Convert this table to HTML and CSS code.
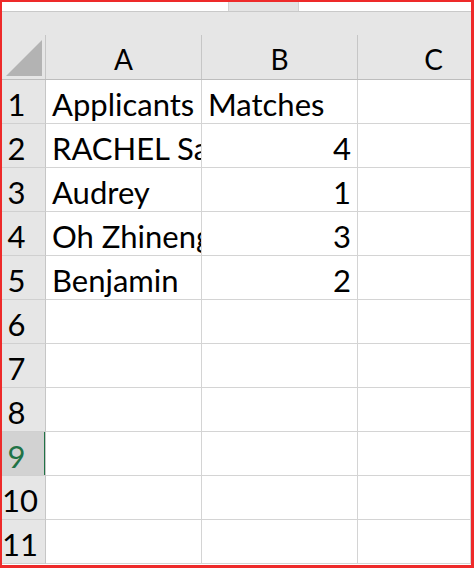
FILE: index.html
```html
<!DOCTYPE html>
<html>
<head>
<meta charset="utf-8">
<link rel="stylesheet" href="styles.css">
</head>
<body>
<div class="frame">
  <div class="topbar"><div class="tab"></div></div>
  <div class="colheads">
    <div class="corner"><svg class="tri" width="36" height="36" viewBox="0 0 36 36"><polygon points="36,0 36,36 0,36" fill="#b3b3b3"/></svg></div>
    <div class="ch">A</div>
    <div class="ch">B</div>
    <div class="ch last">C</div>
  </div>
  <div class="sheet">
    <div class="rh">1</div><div class="c">Applicants</div><div class="c">Matches</div><div class="c"></div>
    <div class="rh">2</div><div class="c">RACHEL Sang</div><div class="c num">4</div><div class="c"></div>
    <div class="rh">3</div><div class="c">Audrey</div><div class="c num">1</div><div class="c"></div>
    <div class="rh">4</div><div class="c">Oh Zhineng</div><div class="c num">3</div><div class="c"></div>
    <div class="rh">5</div><div class="c">Benjamin</div><div class="c num">2</div><div class="c"></div>
    <div class="rh">6</div><div class="c"></div><div class="c"></div><div class="c"></div>
    <div class="rh">7</div><div class="c"></div><div class="c"></div><div class="c"></div>
    <div class="rh">8</div><div class="c"></div><div class="c"></div><div class="c"></div>
    <div class="rh sel">9</div><div class="c"></div><div class="c"></div><div class="c"></div>
    <div class="rh">10</div><div class="c"></div><div class="c"></div><div class="c"></div>
    <div class="rh">11</div><div class="c"></div><div class="c"></div><div class="c"></div>
  </div>
</div>
</body>
</html>
```
FILE: styles.css
```css
html, body {
  margin: 0;
  padding: 0;
  background: #ffffff;
}
.frame {
  width: 474px;
  height: 568px;
  box-sizing: border-box;
  border-style: solid;
  border-color: #ee2a2a;
  border-width: 2px 3px 3px 2px;
  overflow: hidden;
  font-family: Lato, "Liberation Sans", sans-serif;
  color: #000;
  background: #fff;
}
.topbar {
  height: 10px;
  box-sizing: border-box;
  border-bottom: 1px solid #c9c9c9;
  background: #ffffff;
  display: flex;
}
.tab {
  margin-left: 226px;
  width: 69px;
  height: 9px;
  background: #e4e4e4;
  border-left: 1px solid #d2d2d2;
  border-right: 1px solid #d2d2d2;
}
.colheads {
  display: grid;
  grid-template-columns: 44px 156px 156px 1fr;
  background: #e6e6e6;
  padding-top: 23px;
  border-bottom: 1px solid #bdbdbd;
}
.corner {
  height: 44px;
  box-sizing: border-box;
  border-right: 1px solid #c6c6c6;
  display: flex;
  align-items: flex-end;
  justify-content: flex-end;
  padding: 0 3px 3px 0;
}
.tri { display: block; }
.ch {
  height: 44px;
  box-sizing: border-box;
  border-right: 1px solid #c6c6c6;
  font-size: 28px;
  line-height: 48px;
  text-align: center;
}
.ch.last {
  border-right: none;
  padding-left: 38px;
}
.sheet {
  display: grid;
  grid-template-columns: 44px 156px 156px 1fr;
  grid-auto-rows: 44px;
}
.rh {
  background: #e6e6e6;
  border-right: 1px solid #c6c6c6;
  border-bottom: 1px solid #d0d0d0;
  font-size: 31px;
  line-height: 48px;
  text-align: center;
  padding-right: 14px;
  overflow: hidden;
  white-space: nowrap;
  position: relative;
}
.rh.sel {
  background: #d2d2d2;
  color: #217346;
}
.rh.sel::after {
  content: "";
  position: absolute;
  right: -1px;
  top: 0;
  bottom: -1px;
  width: 2px;
  background: #217346;
}
.c {
  border-right: 1px solid #d4d4d4;
  border-bottom: 1px solid #d4d4d4;
  font-size: 31px;
  line-height: 48px;
  padding: 0 6px;
  white-space: nowrap;
  overflow: hidden;
}
.c.num { text-align: right; }
```
